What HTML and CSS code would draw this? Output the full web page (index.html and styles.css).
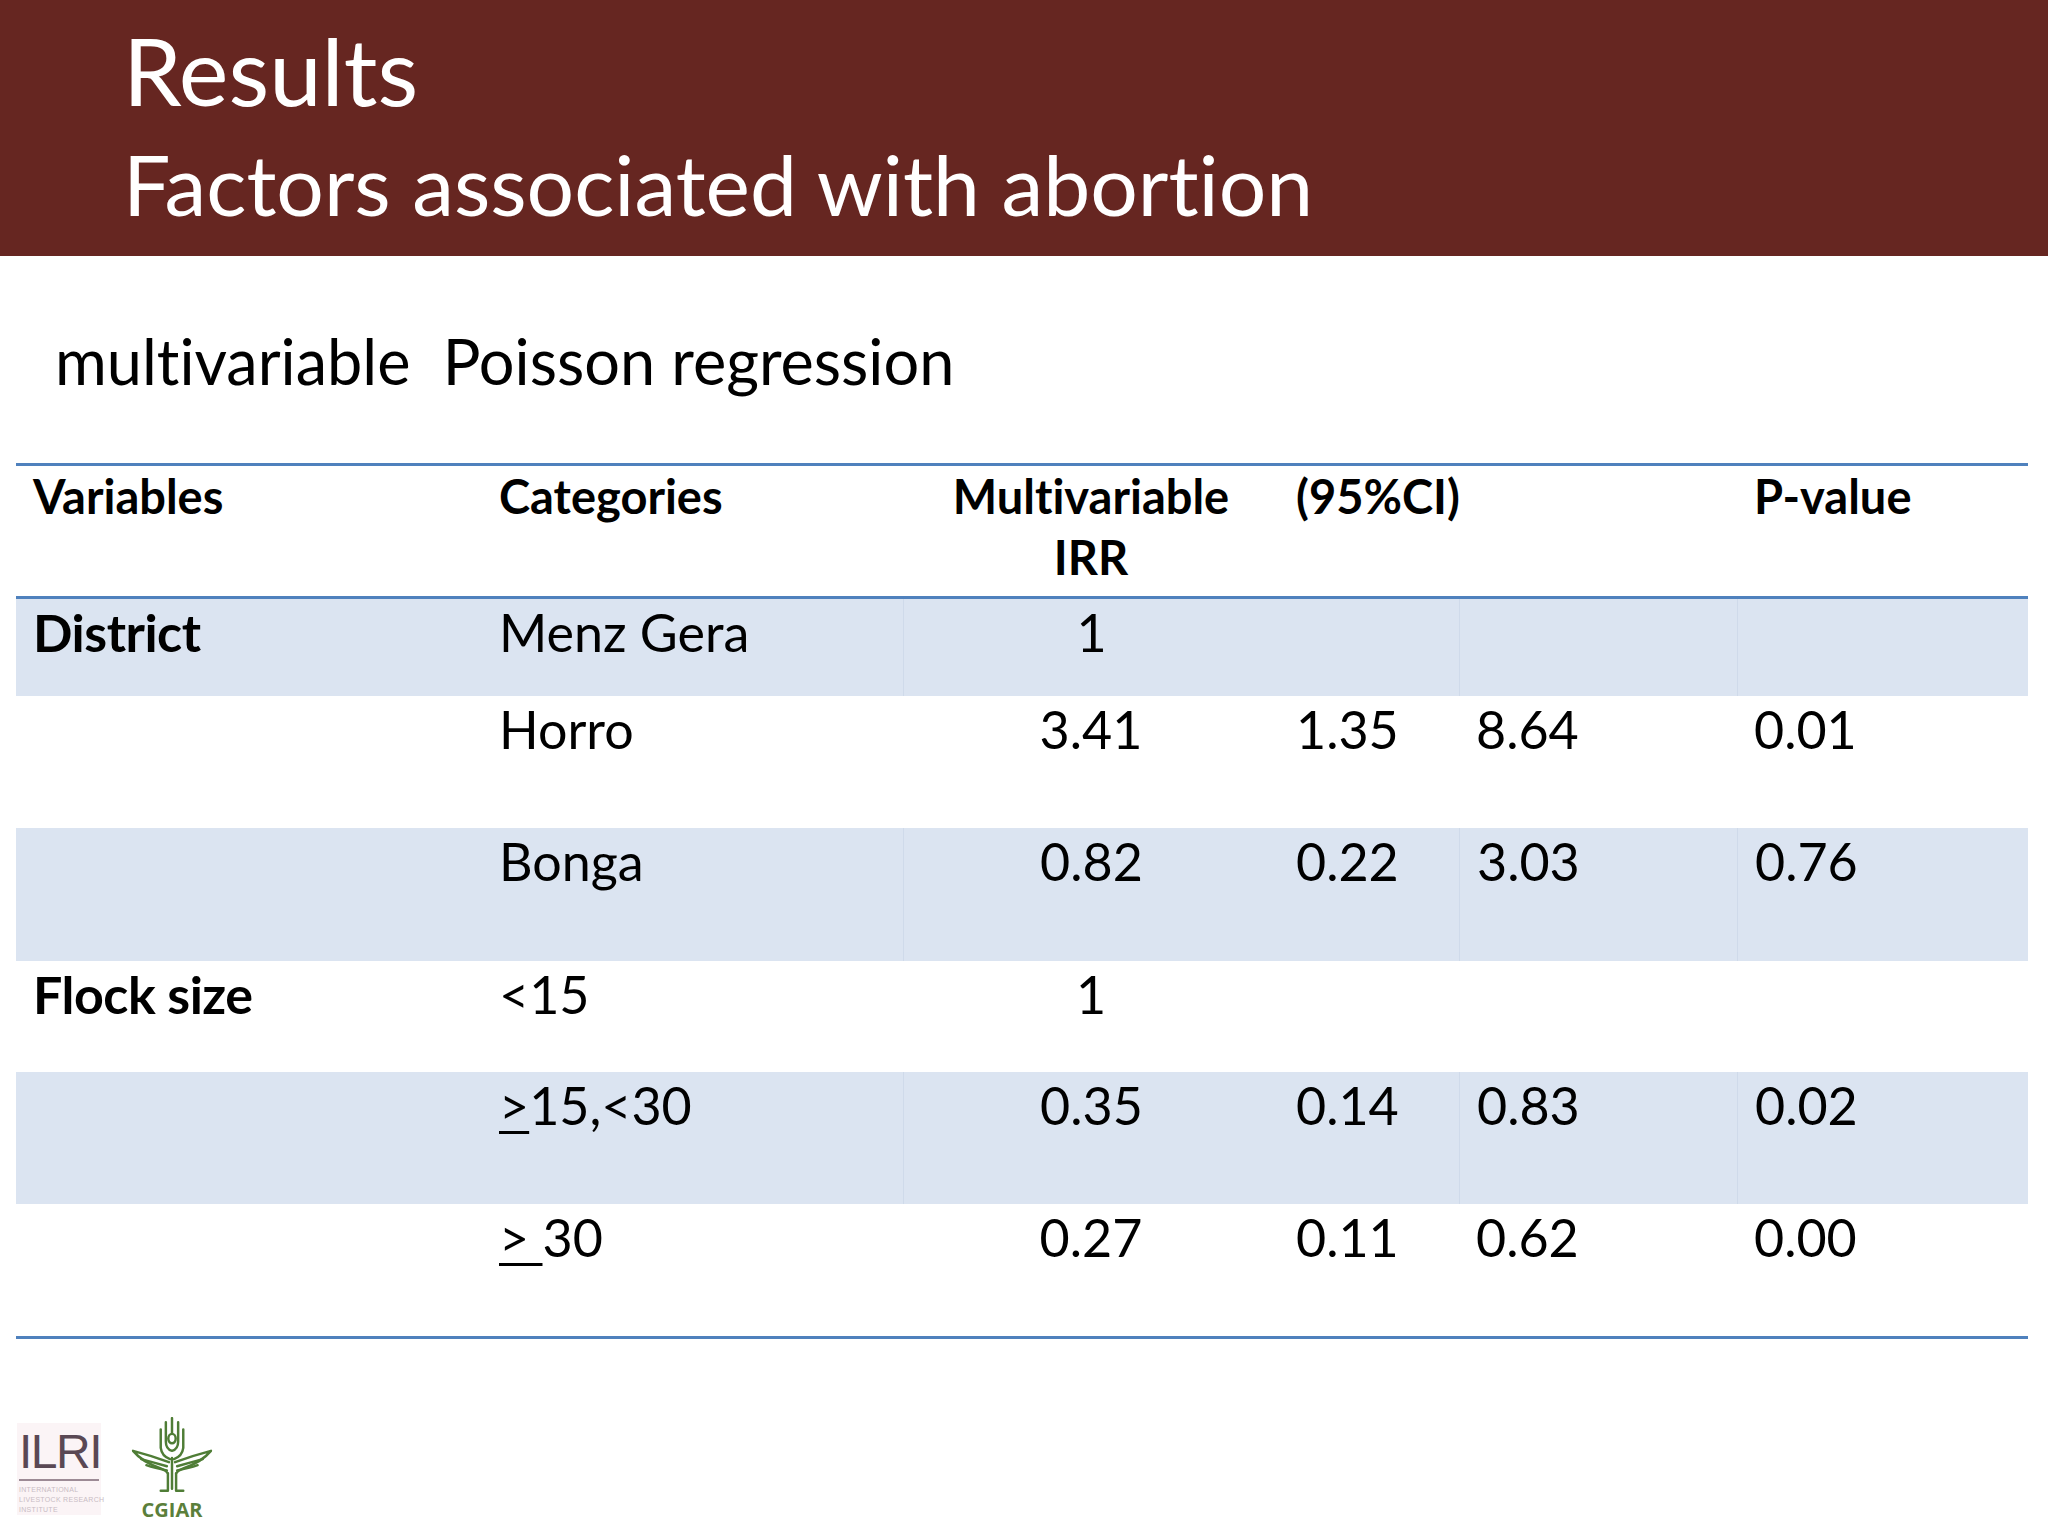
FILE: index.html
```html
<!DOCTYPE html>
<html lang="en">
<head>
<meta charset="utf-8">
<title>Results - Factors associated with abortion</title>
<link rel="stylesheet" href="styles.css">
</head>
<body>
<div class="slide">
  <header class="banner">
    <div class="title">Results</div>
    <div class="subtitle">Factors associated with abortion</div>
  </header>
  <div class="lead">multivariable&nbsp; Poisson regression</div>
  <table class="results">
    <colgroup>
      <col class="c1"><col class="c2"><col class="c3"><col class="c4"><col class="c5"><col class="c6">
    </colgroup>
    <thead>
      <tr class="hrow">
        <th>Variables</th>
        <th>Categories</th>
        <th class="ctr">Multivariable<br>IRR</th>
        <th colspan="2">(95%CI)</th>
        <th>P-value</th>
      </tr>
    </thead>
    <tbody>
      <tr class="r1 shade">
        <td class="var">District</td>
        <td>Menz Gera</td>
        <td class="ctr sep">1</td>
        <td></td>
        <td class="sep"></td>
        <td class="sep"></td>
      </tr>
      <tr class="r2">
        <td></td>
        <td>Horro</td>
        <td class="ctr">3.41</td>
        <td>1.35</td>
        <td>8.64</td>
        <td>0.01</td>
      </tr>
      <tr class="r3 shade">
        <td></td>
        <td>Bonga</td>
        <td class="ctr sep">0.82</td>
        <td>0.22</td>
        <td class="sep">3.03</td>
        <td class="sep">0.76</td>
      </tr>
      <tr class="r4">
        <td class="var">Flock size</td>
        <td>&lt;15</td>
        <td class="ctr">1</td>
        <td></td>
        <td></td>
        <td></td>
      </tr>
      <tr class="r5 shade">
        <td></td>
        <td><u>&gt;</u>15,&lt;30</td>
        <td class="ctr sep">0.35</td>
        <td>0.14</td>
        <td class="sep">0.83</td>
        <td class="sep">0.02</td>
      </tr>
      <tr class="r6 last">
        <td></td>
        <td><u>&gt;&nbsp;</u>30</td>
        <td class="ctr">0.27</td>
        <td>0.11</td>
        <td>0.62</td>
        <td>0.00</td>
      </tr>
    </tbody>
  </table>
  <footer class="logos">
    <div class="ilri">
      <div class="ilri-mark">ILRI</div>
      <div class="ilri-rule"></div>
      <div class="ilri-small">INTERNATIONAL</div>
      <div class="ilri-small">LIVESTOCK RESEARCH</div>
      <div class="ilri-small">INSTITUTE</div>
    </div>
    <div class="cgiar">
      <svg class="cgiar-icon" width="84" height="78" viewBox="0 0 82 76" fill="none" stroke="#4f7d36" stroke-width="2.4" stroke-linecap="round" stroke-linejoin="round">
        <path d="M41 1 V16"/>
        <ellipse cx="41" cy="21" rx="3.6" ry="4.6"/>
        <path d="M35 5 V24 Q35 31 41 33 Q47 31 47 24 V5"/>
        <path d="M30 12 V30 Q31 38 39 41"/>
        <path d="M52 12 V30 Q51 38 43 41"/>
        <path d="M38 44 Q22 38 3 33 Q12 44 30 50 Q35 52 37 55"/>
        <path d="M36 48 Q22 44 11 41"/>
        <path d="M36 52 Q24 50 16 47"/>
        <path d="M44 44 Q60 38 79 33 Q70 44 52 50 Q47 52 45 55"/>
        <path d="M46 48 Q60 44 71 41"/>
        <path d="M46 52 Q58 50 66 47"/>
        <path d="M37 55 V72 H30"/>
        <path d="M45 55 V72 H52"/>
        <path d="M41 40 V70"/>
      </svg>
      <div class="cgiar-word">CGIAR</div>
    </div>
  </footer>
</div>
</body>
</html>
```

FILE: styles.css
```css
html, body {
  margin: 0;
  padding: 0;
  background: #ffffff;
}

.slide {
  width: 2048px;
  height: 1536px;
  overflow: hidden;
  position: relative;
  background: #ffffff;
  font-family: Lato, "Open Sans", sans-serif;
  font-variant-ligatures: none;
  color: #000000;
}

.banner {
  height: 256px;
  box-sizing: border-box;
  background: #662621;
  color: #ffffff;
  padding: 14px 0 0 123px;
}

.title {
  font-size: 94px;
  line-height: 112px;
  font-weight: 400;
}

.subtitle {
  font-size: 84px;
  line-height: 100px;
  margin-top: 8px;
  font-weight: 400;
}

.lead {
  font-size: 63px;
  line-height: 75px;
  padding-left: 55px;
  margin-top: 67px;
  height: 75px;
  margin-bottom: 65px;
}

.results {
  margin-left: 16px;
  width: 2012px;
  table-layout: fixed;
  border-collapse: separate;
  border-spacing: 0;
}

.c1 { width: 466px; }
.c2 { width: 421px; }
.c3 { width: 376px; }
.c4 { width: 180px; }
.c5 { width: 278px; }
.c6 { width: 291px; }

.results th,
.results td {
  padding: 2px 0 0 17px;
  vertical-align: top;
  text-align: left;
}

.results th {
  font-size: 47px;
  line-height: 61px;
  font-weight: 700;
  border-top: 3px solid #4f81bd;
  border-bottom: 3px solid #4f81bd;
  padding-top: 0;
}

.hrow { height: 136px; }

.results td {
  font-size: 52px;
  line-height: 62px;
  font-weight: 400;
}

.results .ctr {
  text-align: center;
  padding-left: 0;
}

.results .var {
  font-weight: 700;
  letter-spacing: -0.5px;
}

.shade td {
  background: #dbe4f1;
}

.shade td.sep {
  border-left: 1px solid #cfdaea;
}

.r1 { height: 97px; }
.r2 { height: 132px; }
.r3 { height: 133px; }
.r4 { height: 111px; }
.r5 { height: 132px; }
.r6 { height: 135px; }

.last td {
  border-bottom: 3px solid #4f81bd;
}

u {
  text-decoration-thickness: 3px;
  text-underline-offset: 6px;
}

.logos {
  display: flex;
  align-items: flex-start;
  gap: 28px;
  padding-left: 17px;
  margin-top: 84px;
}

.ilri {
  width: 84px;
  padding-top: 8px;
  background: #fbf4f6;
}

.ilri-mark {
  font-family: "Liberation Sans", sans-serif;
  font-size: 48px;
  line-height: 42px;
  letter-spacing: -1.5px;
  color: #5a4854;
  padding-left: 2px;
}

.ilri-rule {
  height: 2px;
  background: #9c8a95;
  margin: 6px 2px 4px 2px;
}

.ilri-small {
  font-family: "Liberation Sans", sans-serif;
  font-size: 7px;
  line-height: 10px;
  letter-spacing: 0.3px;
  color: #c9bcc4;
  padding-left: 2px;
  white-space: nowrap;
}

.cgiar {
  display: flex;
  flex-direction: column;
  align-items: center;
  width: 86px;
  margin-top: -6px;
}

.cgiar-icon {
  display: block;
}

.cgiar-word {
  font-family: "Open Sans", sans-serif;
  font-weight: 700;
  font-size: 20px;
  line-height: 24px;
  color: #5b7f3b;
  margin-top: 3px;
}
```
